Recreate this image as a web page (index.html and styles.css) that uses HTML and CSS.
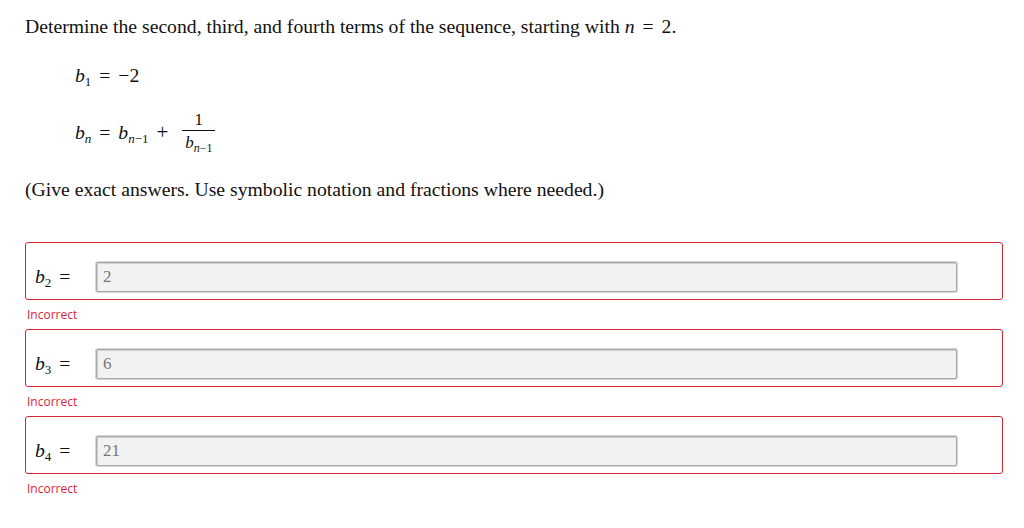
FILE: index.html
```html
<!DOCTYPE html>
<html>
<head>
<meta charset="utf-8">
<link rel="stylesheet" href="styles.css">
</head>
<body>
<div class="page">
  <p class="prompt">Determine the second, third, and fourth terms of the sequence, starting with <i>n</i> <span class="op">=</span> 2.</p>
  <div class="math">
    <div class="mline l1"><i>b</i><sub>1</sub> <span class="op">=</span> <span class="minus">&minus;</span>2</div>
    <div class="mline l2"><span class="lhs"><i>b<sub>n</sub></i> <span class="op">=</span> <i>b</i><sub><i>n</i>&minus;1</sub> <span class="op plus">+</span> </span><span class="frac"><span class="num">1</span><span class="den"><i>b</i><sub><i>n</i>&minus;1</sub></span></span></div>
  </div>
  <p class="note">(Give exact answers. Use symbolic notation and fractions where needed.)</p>

  <div class="answer">
    <div class="box"><span class="lab"><i>b</i><sub>2</sub> <span class="op">=</span></span><div class="field">2</div></div>
    <div class="status">Incorrect</div>
  </div>
  <div class="answer">
    <div class="box"><span class="lab"><i>b</i><sub>3</sub> <span class="op">=</span></span><div class="field">6</div></div>
    <div class="status">Incorrect</div>
  </div>
  <div class="answer">
    <div class="box"><span class="lab"><i>b</i><sub>4</sub> <span class="op">=</span></span><div class="field">21</div></div>
    <div class="status">Incorrect</div>
  </div>
</div>
</body>
</html>
```
FILE: styles.css
```css
html, body { margin: 0; padding: 0; background: #fff; }
body { font-family: "Liberation Serif", "Times New Roman", serif; color: #111; }
.page { padding: 14px 21px 0 25px; }
p { margin: 0; }
i { font-family: "Liberation Serif", serif; font-style: italic; }
.prompt { font-size: 19.7px; line-height: 24px; }
.op { padding: 0 3px; }
.plus { font-size: 21px; }
sub { font-size: 13px; vertical-align: -4px; line-height: 0; }
.math { padding-left: 50px; font-size: 19.7px; }
.mline { display: block; }
.l1 { line-height: 24px; margin-top: 25px; }
.l2 { margin-top: 21px; height: 48px; display: flex; align-items: center; }
.lhs { white-space: pre; }
.frac { display: inline-flex; flex-direction: column; align-items: center; font-size: 17px; margin-left: 6px; }
.frac .num { line-height: 20px; padding: 0 2px; }
.frac .den { line-height: 22px; border-top: 1px solid #111; padding: 1px 3px 0; }
.frac sub { font-size: 12px; }
.note { font-size: 19.7px; line-height: 24px; margin-top: 21px; }

.answer { margin-top: 41px; }
.answer + .answer { margin-top: 0; }
.box { border: 1px solid #d42636; border-radius: 3px; height: 56px; display: flex; align-items: center; padding: 0 45px 0 9px; }
.lab { font-size: 19.7px; width: 61px; flex: none; position: relative; top: 5px; }
.field { flex: 1; height: 28px; background: #f2f2f2; border: 1px solid #a8a8a8; border-radius: 2px; box-shadow: inset 1px 1px 1px rgba(0,0,0,0.15), 0 0 0 1px #d6d6d6; font-size: 17px; color: #777; line-height: 28px; padding-left: 6px; position: relative; top: 6px; }
.status { font-family: "Open Sans", "Noto Sans", sans-serif; font-size: 12px; color: #dc1e35; padding-left: 2px; margin-top: 6px; line-height: 17px; height: 23px; }
```
